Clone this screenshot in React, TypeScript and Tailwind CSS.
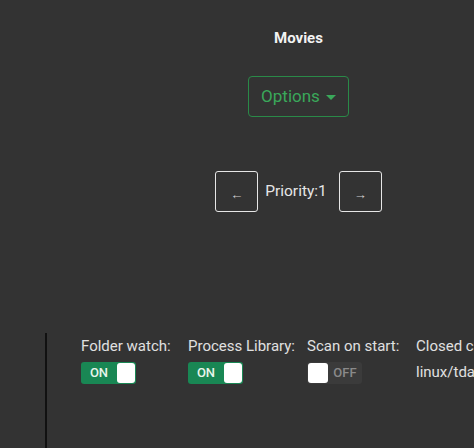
import React from 'react';

function Toggle({ on }: { on: boolean }) {
  if (on) {
    return (
      <div className="flex h-[22px] w-[55px] items-center rounded-[3px] bg-[#198754]">
        <span className="flex-1 text-center text-[13px] font-medium text-[#e8f5ec]">ON</span>
        <span className="mr-[1px] h-[20px] w-[18px] rounded-[3px] bg-white" />
      </div>
    );
  }
  return (
    <div className="flex h-[22px] w-[55px] items-center rounded-[3px] bg-[#3b3b3b]">
      <span className="ml-[1px] h-[20px] w-[20px] rounded-[3px] bg-white" />
      <span className="flex-1 text-center text-[13px] font-medium text-[#8a8a8a]">OFF</span>
    </div>
  );
}

export default function App() {
  return (
    <div
      className="h-[448px] w-[474px] overflow-hidden bg-[#333333] text-[#e4e4e4]"
      style={{ fontFamily: 'Roboto, "Liberation Sans", sans-serif' }}
    >
      {/* Header column */}
      <div className="flex w-[597px] flex-col items-center pt-[28px]">
        <h1 className="text-[15px] font-bold leading-[20px] text-[#f2f2f2]">Movies</h1>

        <button className="mt-[28px] flex h-[41px] w-[101px] items-center justify-center gap-[6px] rounded-[4px] border border-[#2a8a48] text-[17px] text-[#3aa85a]">
          Options
          <span className="mt-[1px] h-0 w-0 border-x-[5px] border-t-[5px] border-x-transparent border-t-[#3aa85a]" />
        </button>

        <div className="mt-[54px] flex items-center gap-[6px]">
          <button className="flex h-[41px] w-[43px] items-center justify-center rounded-[3px] border-[1.5px] border-[#e6e6e6] pt-[6px] text-[13px] text-[#cfcfcf]">
            ←
          </button>
          <span className="px-[1px] text-[15.5px] text-[#e6e6e6]">Priority:1</span>
          <button className="ml-[5px] flex h-[41px] w-[43px] items-center justify-center rounded-[3px] border-[1.5px] border-[#e6e6e6] pt-[6px] text-[13px] text-[#cfcfcf]">
            →
          </button>
        </div>
      </div>

      {/* Library settings */}
      <div className="ml-[45px] mt-[121px] flex h-[200px] border-l-2 border-[#111111] pl-[34px] pt-[4px]">
        <div className="w-[107px] shrink-0">
          <div className="text-[15px] leading-[18px] text-[#e0e0e0]">Folder watch:</div>
          <div className="mt-[7px]">
            <Toggle on />
          </div>
        </div>
        <div className="w-[119px] shrink-0">
          <div className="text-[15px] leading-[18px] text-[#e0e0e0]">Process Library:</div>
          <div className="mt-[7px]">
            <Toggle on />
          </div>
        </div>
        <div className="w-[109px] shrink-0">
          <div className="text-[15px] leading-[18px] text-[#e0e0e0]">Scan on start:</div>
          <div className="mt-[7px]">
            <Toggle on={false} />
          </div>
        </div>
        <div className="w-[200px] shrink-0">
          <div className="whitespace-nowrap text-[15px] leading-[18px] text-[#e0e0e0]">Closed caption path:</div>
          <div className="mt-[8px] whitespace-nowrap text-[15px] leading-[18px] text-[#e0e0e0]">linux/tdarr/cc</div>
        </div>
      </div>
    </div>
  );
}
